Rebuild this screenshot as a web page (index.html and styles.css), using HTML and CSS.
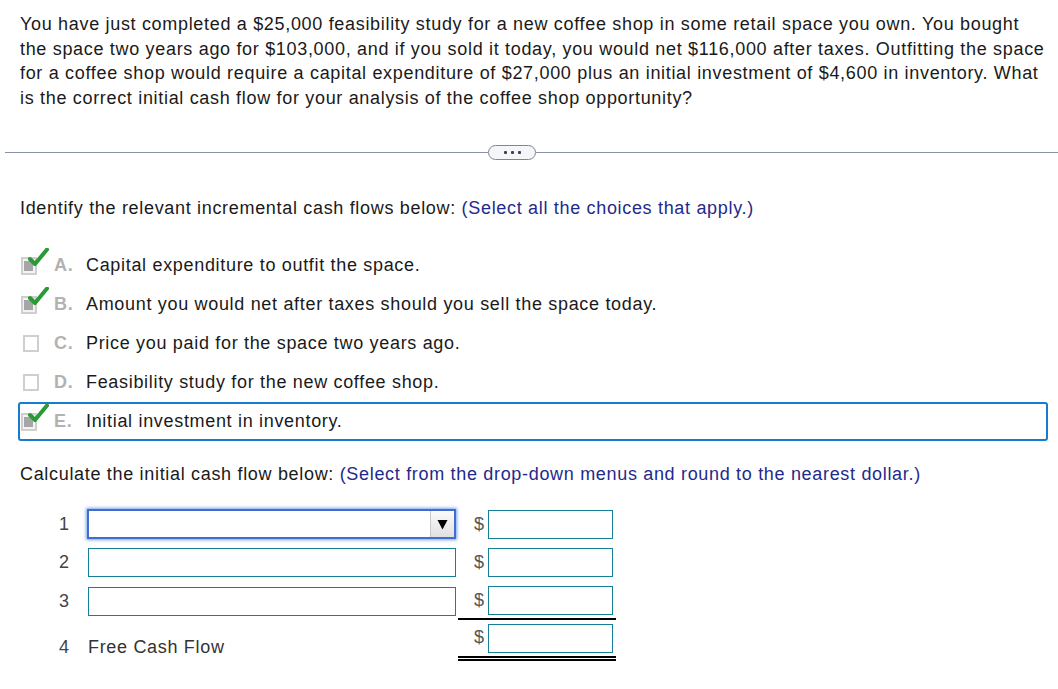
FILE: index.html
```html
<!DOCTYPE html>
<html>
<head>
<meta charset="utf-8">
<link rel="stylesheet" href="styles.css">
</head>
<body>
<div class="page">
  <p class="question">You have just completed a $25,000 feasibility study for a new coffee shop in some retail space you own. You bought the space two years ago for $103,000, and if you sold it today, you would net $116,000 after taxes. Outfitting the space for a coffee shop would require a capital expenditure of $27,000 plus an initial investment of $4,600 in inventory. What is the correct initial cash flow for your analysis of the coffee shop opportunity?</p>

  <div class="divider">
    <div class="line left"></div>
    <div class="more"><span></span><span></span><span></span></div>
    <div class="line"></div>
  </div>

  <p class="prompt">Identify the relevant incremental cash flows below: <span class="hint">(Select all the choices that apply.)</span></p>

  <div class="options">
    <div class="option">
      <svg class="cb" width="34" height="28" viewBox="0 0 34 28"><rect x="2" y="10" width="14" height="16" fill="#f3f3f3" stroke="#cfcfcf" stroke-width="2"/><rect x="4" y="13" width="9" height="10" fill="#a6a6a6"/><path d="M10 11 L15 16 L27 1.5" fill="none" stroke="#2a9a36" stroke-width="4" stroke-linecap="round" stroke-linejoin="round"/></svg>
      <span class="letter">A.</span><span class="text">Capital expenditure to outfit the space.</span>
    </div>
    <div class="option">
      <svg class="cb" width="34" height="28" viewBox="0 0 34 28"><rect x="2" y="10" width="14" height="16" fill="#f3f3f3" stroke="#cfcfcf" stroke-width="2"/><rect x="4" y="13" width="9" height="10" fill="#a6a6a6"/><path d="M10 11 L15 16 L27 1.5" fill="none" stroke="#2a9a36" stroke-width="4" stroke-linecap="round" stroke-linejoin="round"/></svg>
      <span class="letter">B.</span><span class="text">Amount you would net after taxes should you sell the space today.</span>
    </div>
    <div class="option">
      <svg class="cb" width="34" height="28" viewBox="0 0 34 28"><rect x="4" y="10" width="14" height="15" fill="#fff" stroke="#cfcfcf" stroke-width="2"/></svg>
      <span class="letter">C.</span><span class="text">Price you paid for the space two years ago.</span>
    </div>
    <div class="option">
      <svg class="cb" width="34" height="28" viewBox="0 0 34 28"><rect x="4" y="10" width="14" height="15" fill="#fff" stroke="#cfcfcf" stroke-width="2"/></svg>
      <span class="letter">D.</span><span class="text">Feasibility study for the new coffee shop.</span>
    </div>
    <div class="option focused">
      <svg class="cb" width="34" height="28" viewBox="0 0 34 28"><rect x="2" y="10" width="14" height="16" fill="#f3f3f3" stroke="#cfcfcf" stroke-width="2"/><rect x="4" y="13" width="9" height="10" fill="#a6a6a6"/><path d="M10 11 L15 16 L27 1.5" fill="none" stroke="#2a9a36" stroke-width="4" stroke-linecap="round" stroke-linejoin="round"/></svg>
      <span class="letter">E.</span><span class="text">Initial investment in inventory.</span>
    </div>
  </div>

  <p class="prompt calc">Calculate the initial cash flow below: <span class="hint">(Select from the drop-down menus and round to the nearest dollar.)</span></p>

  <div class="table">
    <div class="row">
      <span class="num">1</span>
      <div class="select"><span class="arrow"><svg width="11" height="11" viewBox="0 0 11 11"><path d="M0.5 1 H10.5 L5.5 10.5 Z" fill="#000"/></svg></span></div>
      <div class="amount"><span class="dollar">$</span><div class="input"></div></div>
    </div>
    <div class="row">
      <span class="num">2</span>
      <div class="field"></div>
      <div class="amount"><span class="dollar">$</span><div class="input"></div></div>
    </div>
    <div class="row">
      <span class="num">3</span>
      <div class="field"></div>
      <div class="amount single"><span class="dollar">$</span><div class="input"></div></div>
    </div>
    <div class="row total">
      <span class="num">4</span>
      <span class="label">Free Cash Flow</span>
      <div class="amount double"><span class="dollar">$</span><div class="input"></div></div>
    </div>
  </div>
</div>
</body>
</html>
```

FILE: styles.css
```css
* { box-sizing: border-box; }
html, body { margin: 0; padding: 0; background: #fff; }
body {
  font-family: "Liberation Sans", Arial, sans-serif;
  font-size: 18px;
  letter-spacing: 0.68px;
  color: #1a1a1a;
}
.page { width: 1058px; }
.question {
  margin: 0;
  padding: 12px 8px 0 20px;
  line-height: 24.5px;
}
.divider {
  display: flex;
  align-items: center;
  margin: 34px 0 0 5px;
  height: 16px;
}
.divider .line { flex: 1; height: 1px; background: #8a94a6; }
.divider .line.left { flex: none; width: 483px; }
.more {
  width: 48px;
  height: 15px;
  border: 1px solid #7c8696;
  border-radius: 8px;
  background: #f4f6f9;
  display: flex;
  align-items: center;
  justify-content: center;
  gap: 4px;
}
.more span { width: 3px; height: 3px; background: #3b4250; border-radius: 1px; }
.prompt {
  margin: 36px 0 0 20px;
  line-height: 24px;
}
.hint { color: #1f2a8c; }
.options { margin-top: 26px; }
.option {
  display: flex;
  align-items: center;
  height: 39px;
  margin-left: 18px;
  width: 1030px;
  border: 2px solid transparent;
}
.option.focused { border-color: #1a7ad0; border-radius: 3px; }
.cb { margin-top: -8px; flex: none; }
.letter {
  color: #b2b2b2;
  font-weight: bold;
  width: 32px;
}
.text { color: #1a1a1a; }
.calc { margin-top: 21px; }
.table { margin-top: 19px; }
.row {
  display: flex;
  align-items: center;
  height: 38px;
}
.row:nth-child(2) { height: 39px; }
.num {
  width: 87px;
  padding-left: 59px;
  color: #444;
}
.select {
  width: 369px;
  height: 30px;
  border: 2px solid #3c6fd1;
  box-shadow: 0 0 3px 1px #7ea3e8;
  display: flex;
  justify-content: flex-end;
  align-items: stretch;
  background: #fff;
}
.arrow {
  width: 24px;
  background: linear-gradient(#fbfbfb, #e0e0e0);
  border-left: 1px solid #c8c8c8;
  display: flex;
  align-items: center;
  justify-content: center;
}
.arrow svg { display: block; }
.field {
  width: 368px;
  height: 29px;
  margin-left: 1px;
  border: 1px solid #167f98;
}
.amount {
  display: flex;
  align-items: center;
  margin-left: 2px;
  padding: 0 3px 0 16px;
  height: 38px;
}
.dollar { color: #555; width: 14px; letter-spacing: 0; }
.input {
  width: 125px;
  height: 29px;
  border: 1px solid #167f98;
}
.amount.single { border-bottom: 2px solid #000; }
.total { height: 44px; align-items: flex-start; }
.total .num, .total .label { margin-top: 17px; }
.label { color: #333; margin-left: 1px; width: 368px; flex: none; }
.amount.double {
  height: 41px;
  align-items: flex-start;
  padding-top: 4px;
  border-bottom: 5px double #000;
}
.amount.double .dollar { margin-top: 3px; }
```
